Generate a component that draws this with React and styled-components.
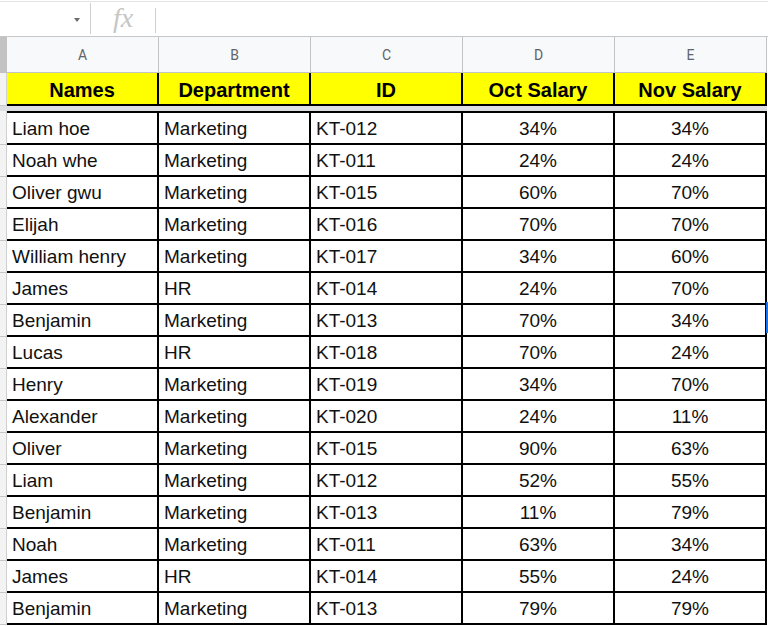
import React from 'react';
import styled, { createGlobalStyle } from 'styled-components';

const GlobalStyle = createGlobalStyle`
  html, body {
    margin: 0;
    padding: 0;
    background: #fff;
    overflow: hidden;
  }
`;

const Page = styled.div`
  width: 768px;
  height: 626px;
  overflow: hidden;
  position: relative;
  font-family: "Liberation Sans", Arial, sans-serif;
`;

const FormulaBar = styled.div`
  margin-top: 1px;
  height: 34px;
  border-top: 1px solid #e3e3e3;
  border-bottom: 1px solid #c7c7c7;
  display: flex;
  align-items: center;
`;

const NameBox = styled.div`
  width: 90px;
  height: 100%;
  display: flex;
  align-items: center;
  justify-content: flex-end;
  padding-right: 10px;
  box-sizing: border-box;
`;

const Caret = styled.span`
  width: 0;
  height: 0;
  border-left: 3px solid transparent;
  border-right: 3px solid transparent;
  border-top: 4px solid #6b6b6b;
  margin-top: 2px;
`;

const Divider = styled.div`
  width: 1px;
  height: ${({ $h }) => $h}px;
  background: #cfcfcf;
  align-self: ${({ $top }) => ($top ? 'flex-start' : 'center')};
  margin-top: ${({ $top }) => ($top ? '1px' : '2px')};
`;

const Fx = styled.div`
  width: 64px;
  text-align: center;
  font-family: "Liberation Serif", "Times New Roman", serif;
  font-style: italic;
  font-size: 28px;
  color: #c6c6c6;
  line-height: 1;
  margin-top: -2px;
`;

const Sheet = styled.div`
  position: relative;
  display: grid;
  grid-template-columns: 7px repeat(5, 152px);
`;

const Corner = styled.div`
  height: 36px;
  background: #c2c2c2;
`;

const ColHead = styled.div`
  height: 36px;
  box-sizing: border-box;
  background: #f8f9fa;
  border-bottom: 1px solid #c4c4c4;
  border-right: 1px solid #c4c4c4;
  display: flex;
  align-items: center;
  justify-content: center;
  font-family: Roboto, "Liberation Sans", sans-serif;
  font-size: 14px;
  color: #606368;
  padding-top: 1px;
`;

const RowHead = styled.div`
  background: #f3f3f3;
  box-sizing: border-box;
  border-right: 1px solid #d0d0d0;
  border-bottom: 1px solid #c8c8c8;
`;

const TitleCell = styled.div`
  height: 33px;
  box-sizing: border-box;
  background: #ffff00;
  border-right: 2px solid #000;
  border-bottom: 2px solid #000;
  display: flex;
  align-items: center;
  justify-content: center;
  padding-top: 3px;
  font-weight: bold;
  font-size: 20px;
  color: #000;
`;

const FreezeBand = styled.div`
  grid-column: 1 / -1;
  height: 5px;
  background: #dcdee2;
`;

const Cell = styled.div`
  height: ${({ $first }) => ($first ? 34 : 32)}px;
  box-sizing: border-box;
  background: #fff;
  border-right: 2px solid #000;
  border-bottom: 2px solid #000;
  border-top: ${({ $first }) => ($first ? '2px solid #000' : 'none')};
  display: flex;
  align-items: center;
  justify-content: ${({ $center }) => ($center ? 'center' : 'flex-start')};
  padding-top: 1px;
  padding-left: ${({ $center }) => ($center ? '0' : '5px')};
  font-size: 19px;
  color: #111;
  white-space: nowrap;
`;

const SelectionEdge = styled.div`
  position: absolute;
  left: 766px;
  top: 265px;
  width: 2px;
  height: 31px;
  background: #1a73e8;
`;

const columns = ['A', 'B', 'C', 'D', 'E'];
const titles = ['Names', 'Department', 'ID', 'Oct Salary', 'Nov Salary'];

const rows = [
  ['Liam hoe', 'Marketing', 'KT-012', '34%', '34%'],
  ['Noah whe', 'Marketing', 'KT-011', '24%', '24%'],
  ['Oliver gwu', 'Marketing', 'KT-015', '60%', '70%'],
  ['Elijah', 'Marketing', 'KT-016', '70%', '70%'],
  ['William henry', 'Marketing', 'KT-017', '34%', '60%'],
  ['James', 'HR', 'KT-014', '24%', '70%'],
  ['Benjamin', 'Marketing', 'KT-013', '70%', '34%'],
  ['Lucas', 'HR', 'KT-018', '70%', '24%'],
  ['Henry', 'Marketing', 'KT-019', '34%', '70%'],
  ['Alexander', 'Marketing', 'KT-020', '24%', '11%'],
  ['Oliver', 'Marketing', 'KT-015', '90%', '63%'],
  ['Liam', 'Marketing', 'KT-012', '52%', '55%'],
  ['Benjamin', 'Marketing', 'KT-013', '11%', '79%'],
  ['Noah', 'Marketing', 'KT-011', '63%', '34%'],
  ['James', 'HR', 'KT-014', '55%', '24%'],
  ['Benjamin', 'Marketing', 'KT-013', '79%', '79%'],
];

const App = () => {
  return (
    <Page>
      <GlobalStyle />
      <FormulaBar>
        <NameBox>
          <Caret />
        </NameBox>
        <Divider $h={31} $top />
        <Fx>fx</Fx>
        <Divider $h={25} />
      </FormulaBar>
      <Sheet>
        <Corner />
        {columns.map((c) => (
          <ColHead key={c}>{c}</ColHead>
        ))}
        <RowHead />
        {titles.map((t) => (
          <TitleCell key={t}>{t}</TitleCell>
        ))}
        <FreezeBand />
        {rows.map((row, i) => (
          <React.Fragment key={i}>
            <RowHead />
            {row.map((value, j) => (
              <Cell key={j} $first={i === 0} $center={j > 2}>
                {value}
              </Cell>
            ))}
          </React.Fragment>
        ))}
        <SelectionEdge />
      </Sheet>
    </Page>
  );
};

export default App;
